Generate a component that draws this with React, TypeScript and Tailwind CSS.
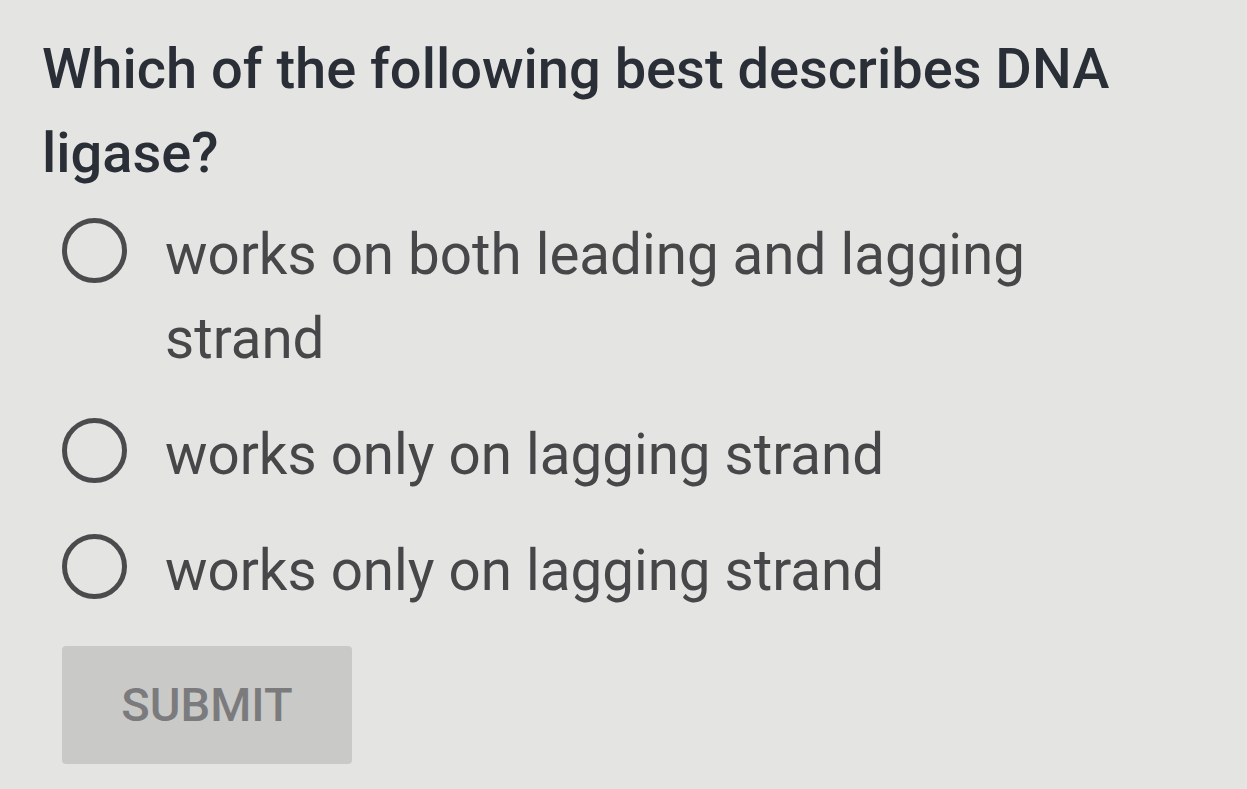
import { useState } from 'react';

const options = [
  'works on both leading and lagging strand',
  'works only on lagging strand',
  'works only on lagging strand',
];

export default function App() {
  const [selected, setSelected] = useState<number | null>(null);

  return (
    <div className="min-h-screen w-full bg-[#e4e4e2] font-['Roboto',sans-serif] pl-[42px] pt-[27px]">
      <h1 className="w-[1120px] text-[56px] leading-[84px] font-medium text-[#2a2e36]">
        Which of the following best describes DNA ligase?
      </h1>

      {/* answer choices */}
      <div className="mt-[18px] pl-[20px] flex flex-col gap-[32px]">
        {options.map((label, i) => (
          <button
            key={i}
            onClick={() => setSelected(i)}
            className="flex items-start gap-[38px] text-left"
          >
            <span className="mt-[5px] w-[65px] h-[65px] shrink-0 rounded-full border-[5px] border-[#4b4b4d] flex items-center justify-center">
              {selected === i && <span className="w-[33px] h-[33px] rounded-full bg-[#4b4b4d]" />}
            </span>
            <span className="w-[900px] text-[56.5px] leading-[84px] text-[#47474a]">{label}</span>
          </button>
        ))}
      </div>

      <button
        disabled
        className="mt-[33px] ml-[20px] w-[290px] h-[118px] rounded-[4px] bg-[#c9c9c8] text-[47px] font-medium text-[#7b7b7d]"
      >
        SUBMIT
      </button>
    </div>
  );
}
